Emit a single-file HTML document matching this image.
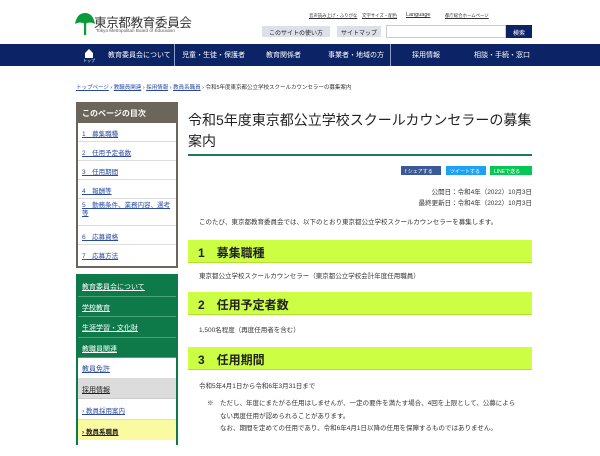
<!DOCTYPE html>
<html><head><meta charset="utf-8"><style>
*{margin:0;padding:0;box-sizing:border-box}
body{width:600px;height:456px;overflow:hidden;background:#fff;font-family:"Liberation Sans","Noto Sans CJK JP",sans-serif;color:#222;position:relative}
.a{position:absolute;white-space:nowrap}
a,.u{text-decoration:underline}
.nav{position:absolute;left:0;top:44px;width:600px;height:22px;background:#0c2466}
.nav span{position:absolute;top:6px;color:#fff;font-size:7px}
.sep{position:absolute;top:0;width:1px;height:22px;background:#8fa0c8}
.toc{position:absolute;left:76px;top:102px;width:102px;height:166px;border:2px solid #6b6659;background:#fff}
.toc .h{height:19px;background:#6b6659;color:#fff;font-size:8px;font-weight:bold;padding:4px 4px}
.toc div.i{border-bottom:1px solid #ddd;font-size:6.5px;color:#2a4aa0;text-decoration:underline;padding:5px 4px;height:19px}
.side{position:absolute;left:76px;top:274px;width:102px;height:171px;border:2px solid #0e7a4a;border-bottom:none}
.side div{height:20.5px;font-size:7px;padding:6px 4px;text-decoration:underline;border-bottom:1px solid #4aa078}
.g{background:#0e7a4a;color:#fff}
.h2{position:absolute;left:188px;width:344px;height:23px;background:#ccff44;font-size:12px;font-weight:bold;padding:4px 10px;border-bottom:1px solid #b0e030}
.t{font-size:6.5px;color:#333}
.tl{font-size:4.4px;color:#333;text-decoration:underline;top:13px}
</style></head><body>
<svg class="a" style="left:74px;top:12px" width="22" height="24" viewBox="0 0 22 24"><path d="M1 12 Q3 1 11 1 Q19 1 21 12 Q16 9 11 12 Q6 9 1 12Z" fill="#0a9a3a"/><rect x="10" y="10" width="2.2" height="13" fill="#0a9a3a"/></svg>
<div class="a" style="left:94px;top:12px;font-size:12.5px;color:#333;letter-spacing:-0.3px">東京都教育委員会</div>
<div class="a" style="left:96px;top:28px;font-size:4.6px;color:#555">Tokyo Metropolitan Board of Education</div>
<div class="a tl" style="left:309px">音声読み上げ・ふりがな</div>
<div class="a tl" style="left:362px">文字サイズ・配色</div>
<div class="a tl" style="left:406px;font-size:5.5px;top:12px">Language</div>
<div class="a tl" style="left:445px">都庁総合ホームページ</div>
<div class="a" style="left:262px;top:26px;width:68px;height:11px;background:#dde0e8;font-size:6px;text-align:center;padding-top:2px">このサイトの使い方</div>
<div class="a" style="left:337px;top:26px;width:44px;height:11px;background:#dde0e8;font-size:6px;text-align:center;padding-top:2px">サイトマップ</div>
<div class="a" style="left:386px;top:25px;width:120px;height:13px;border:1px solid #ccc"></div>
<div class="a" style="left:506px;top:25px;width:26px;height:13px;background:#0c2466;color:#fff;font-size:6px;text-align:center;padding-top:3px">検索</div>
<div class="nav">
<svg class="a" style="left:84px;top:4px" width="10" height="10" viewBox="0 0 10 10"><path d="M1 5 L5 1 L9 5 V10 H1Z" fill="#fff"/></svg>
<span style="left:83px;top:14px;font-size:4px">トップ</span>
<span style="left:108px">教育委員会について</span><div class="sep" style="left:174px"></div>
<span style="left:182px">児童・生徒・保護者</span>
<span style="left:266px">教育関係者</span>
<span style="left:328px">事業者・地域の方</span><div class="sep" style="left:390px"></div>
<span style="left:412px">採用情報</span>
<span style="left:474px">相談・手続・窓口</span>
</div>
<div class="a" style="left:76px;top:83px;font-size:5.5px;color:#333"><span class="u" style="color:#2a4aa0">トップページ</span> › <span class="u" style="color:#2a4aa0">教職員関連</span> › <span class="u" style="color:#2a4aa0">採用情報</span> › <span class="u" style="color:#2a4aa0">教員系職員</span> › 令和5年度東京都公立学校スクールカウンセラーの募集案内</div>
<div class="toc"><div class="h">このページの目次</div>
<div class="i">1　募集職種</div><div class="i">2　任用予定者数</div><div class="i">3　任用期間</div><div class="i">4　報酬等</div><div class="i" style="height:27px;white-space:normal;line-height:8px;padding-top:3px">5　勤務条件、業務内容、選考等</div><div class="i">6　応募資格</div><div class="i" style="border:none">7　応募方法</div></div>
<div class="side">
<div class="g">教育委員会について</div><div class="g">学校教育</div><div class="g">生涯学習・文化財</div><div class="g">教職員関連</div>
<div style="color:#2a4aa0;border-color:#ddd">教員免許</div>
<div style="background:#dcdcdc;color:#222;border-color:#ccc">採用情報</div>
<div style="color:#2a4aa0;font-size:6.5px;border-color:#ddd">› 教員採用案内</div>
<div style="background:#fafaa0;color:#222;font-size:6.5px;font-weight:bold;border:none">› 教員系職員</div>
</div>
<div class="a" style="left:188px;top:110px;font-size:14px;line-height:21px;color:#222">令和5年度東京都公立学校スクールカウンセラーの募集<br>案内</div>
<div class="a" style="left:188px;top:154px;width:344px;height:2px;background:#1e7a5a"></div>
<div class="a" style="left:401px;top:166px;width:40px;height:9px;background:#3b5998;color:#fff;font-size:5px;padding:2px 0 0 4px">f シェアする</div>
<div class="a" style="left:446px;top:166px;width:40px;height:9px;background:#1da1f2;color:#fff;font-size:5px;padding:2px 0 0 4px">ツイートする</div>
<div class="a" style="left:490px;top:166px;width:42px;height:9px;background:#06c755;color:#fff;font-size:5px;padding:2px 0 0 4px">LINEで送る</div>
<div class="a t" style="right:68px;top:186px">公開日：令和4年（2022）10月3日</div>
<div class="a t" style="right:68px;top:197px">最終更新日：令和4年（2022）10月3日</div>
<div class="a t" style="left:199px;top:216px">このたび、東京都教育委員会では、以下のとおり東京都公立学校スクールカウンセラーを募集します。</div>
<div class="h2" style="top:240px">1　募集職種</div>
<div class="a t" style="left:199px;top:270px">東京都公立学校スクールカウンセラー（東京都公立学校会計年度任用職員）</div>
<div class="h2" style="top:292px">2　任用予定者数</div>
<div class="a t" style="left:199px;top:324px">1,500名程度（再度任用者を含む）</div>
<div class="h2" style="top:347px">3　任用期間</div>
<div class="a t" style="left:199px;top:380px">令和5年4月1日から令和6年3月31日まで</div>
<div class="a t" style="left:207px;top:397px">※　ただし、年度にまたがる任用はしませんが、一定の要件を満たす場合、4回を上限として、公募によら</div>
<div class="a t" style="left:220px;top:410px">ない再度任用が認められることがあります。</div>
<div class="a t" style="left:220px;top:422px">なお、期間を定めての任用であり、令和6年4月1日以降の任用を保障するものではありません。</div>
</body></html>
